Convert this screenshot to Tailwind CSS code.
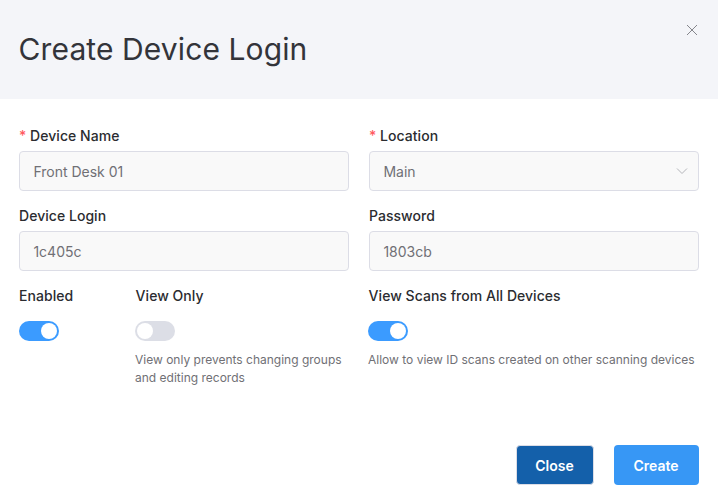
<!DOCTYPE html>
<html lang="en">
  <head>
    <meta charset="UTF-8" />
    <title>Create Device Login</title>
    <script src="https://cdn.jsdelivr.net/npm/@tailwindcss/browser@4"></script>
  </head>
  <body class="bg-white font-['Inter',sans-serif] overflow-hidden">
    <div class="w-[718px] h-[504px] flex flex-col">
      <!-- Header -->
      <div class="h-[99px] bg-[#f4f5f9] pl-[18.6px] pr-[20px] flex justify-between">
        <h2 class="mt-[29px] text-[30px] leading-[40px] font-normal tracking-[0.1px] text-[#33343a]">Create Device Login</h2>
        <svg class="mt-[24px]" width="12" height="12" viewBox="0 0 12 12" fill="none" stroke="#85868c" stroke-width="1">
          <path d="M1 1 L11 11 M11 1 L1 11" />
        </svg>
      </div>

      <!-- Form -->
      <div class="px-[19px] pt-[27px] flex-1 flex flex-col">
        <div class="grid grid-cols-[330px_330px] gap-x-[20px] gap-y-[15px]">
          <div>
            <label class="block text-[14px] leading-[20px] font-medium tracking-[0.04px] text-[#2b2c30] mb-[5px]"><span class="text-[#ff5a5f]">*</span> Device Name</label>
            <input value="Front Desk 01" class="block w-full h-[40px] px-[13.4px] text-[14px] text-[#707075] bg-[#f9f9f9] border border-[#dcdde6] rounded-[4px] outline-none" />
          </div>
          <div>
            <label class="block text-[14px] leading-[20px] font-medium tracking-[0.04px] text-[#2b2c30] mb-[5px]"><span class="text-[#ff5a5f]">*</span> Location</label>
            <div class="h-[40px] pl-[13.4px] pr-[10px] flex items-center justify-between text-[14px] text-[#707075] bg-[#f9f9f9] border border-[#dcdde6] rounded-[4px]">
              <span>Main</span>
              <svg width="12" height="8" viewBox="0 0 12 8" fill="none" stroke="#b4b5ba" stroke-width="1"><path d="M1 1.5 L6 6.5 L11 1.5" /></svg>
            </div>
          </div>
          <div>
            <label class="block text-[14px] leading-[20px] font-medium tracking-[0.04px] text-[#2b2c30] mb-[5px]">Device Login</label>
            <input value="1c405c" class="block w-full h-[40px] px-[13.4px] text-[14px] text-[#707075] bg-[#f9f9f9] border border-[#dcdde6] rounded-[4px] outline-none" />
          </div>
          <div>
            <label class="block text-[14px] leading-[20px] font-medium tracking-[0.04px] text-[#2b2c30] mb-[5px]">Password</label>
            <input value="1803cb" class="block w-full h-[40px] px-[13.4px] text-[14px] text-[#707075] bg-[#f9f9f9] border border-[#dcdde6] rounded-[4px] outline-none" />
          </div>
        </div>

        <!-- Toggles -->
        <div class="mt-[15px] grid grid-cols-[116px_214px_330px]">
          <div>
            <div class="text-[14px] leading-[20px] font-medium tracking-[0.04px] text-[#2b2c30]">Enabled</div>
            <div class="mt-[15px] w-[40px] h-[20px] rounded-full bg-[#3b9bff] flex items-center justify-end pr-[2px]">
              <div class="w-[16px] h-[16px] rounded-full bg-white"></div>
            </div>
          </div>
          <div>
            <div class="pl-[0.6px] text-[14px] leading-[20px] font-medium tracking-[0.04px] text-[#2b2c30]">View Only</div>
            <div class="mt-[15px] w-[40px] h-[20px] rounded-full bg-[#dcdee6] flex items-center pl-[2px]">
              <div class="w-[16px] h-[16px] rounded-full bg-white"></div>
            </div>
            <p class="mt-[10px] text-[12px] leading-[18px] text-[#707075]">View only prevents changing groups<br />and editing records</p>
          </div>
          <div class="ml-[19px]">
            <div class="pl-[0.6px] text-[14px] leading-[20px] font-medium tracking-[0.04px] text-[#2b2c30]">View Scans from All Devices</div>
            <div class="mt-[15px] w-[40px] h-[20px] rounded-full bg-[#3b9bff] flex items-center justify-end pr-[2px]">
              <div class="w-[16px] h-[16px] rounded-full bg-white"></div>
            </div>
            <p class="mt-[10px] text-[12px] leading-[18px] text-[#707075] whitespace-nowrap">Allow to view ID scans created on other scanning devices</p>
          </div>
        </div>

        <!-- Footer -->
        <div class="mt-auto mb-[19px] flex justify-end gap-[20px]">
          <button class="w-[78px] h-[40px] pr-[1px] bg-[#1460aa] border border-[#dcdde6] rounded-[4px] text-[14px] font-semibold text-white">Close</button>
          <button class="w-[85px] h-[40px] pr-[1px] bg-[#3797f5] rounded-[4px] text-[14px] font-semibold text-white">Create</button>
        </div>
      </div>
    </div>
  </body>
</html>
